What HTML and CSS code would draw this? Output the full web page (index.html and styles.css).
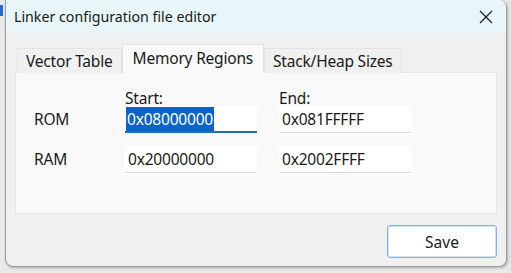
FILE: index.html
```html
<!DOCTYPE html>
<html>
<head>
<meta charset="utf-8">
<link rel="stylesheet" href="styles.css">
</head>
<body>
<div class="backdrop-mark"></div>
<div class="window">
  <div class="titlebar">
    <span class="title">Linker configuration file editor</span>
    <svg class="close" width="14" height="14" viewBox="0 0 14 14"><path d="M1 1 L13 13 M13 1 L1 13" stroke="#1a1a1a" stroke-width="1.2" fill="none"/></svg>
  </div>
  <div class="body">
    <div class="tabs">
      <div class="tab">Vector Table</div>
      <div class="tab active">Memory Regions</div>
      <div class="tab">Stack/Heap Sizes</div>
    </div>
    <div class="panel">
      <div class="grid">
        <div></div>
        <div class="colhead">Start:</div>
        <div class="colhead">End:</div>
        <div class="rowlabel">ROM</div>
        <div class="field focused"><span class="sel">0x08000000</span></div>
        <div class="field">0x081FFFFF</div>
        <div class="rowlabel">RAM</div>
        <div class="field">0x20000000</div>
        <div class="field">0x2002FFFF</div>
      </div>
    </div>
    <div class="footer">
      <button class="save">Save</button>
    </div>
  </div>
</div>
</body>
</html>
```
FILE: styles.css
```css
html, body {
  margin: 0;
  padding: 0;
}
body {
  width: 511px;
  height: 273px;
  background: #e9e9e9;
  font-family: "Noto Sans", "Open Sans", sans-serif;
  color: #1a1a1a;
  overflow: hidden;
  position: relative;
}
.backdrop-mark {
  position: absolute;
  left: 0;
  top: 5px;
  width: 3px;
  height: 11px;
  background: #1f6fd1;
}
.window {
  margin-left: 5px;
  width: 500px;
  height: 266px;
  border: 1px solid #9c9c9c;
  border-top: none;
  border-radius: 0 8px 8px 8px;
  background: #f0f0f0;
  box-shadow: 1px 1px 3px rgba(0,0,0,0.25);
  display: flex;
  flex-direction: column;
  overflow: hidden;
}
.titlebar {
  height: 33px;
  background: #e8f6f9;
  display: flex;
  align-items: center;
  justify-content: space-between;
  padding: 0 13px 0 8px;
}
.title {
  font-size: 14.2px;
  letter-spacing: 0;
}
.body {
  padding: 11px 9px 0 9px;
  display: flex;
  flex-direction: column;
}
.tabs {
  display: flex;
  align-items: flex-end;
  margin-left: 2px;
  height: 29px;
  margin-bottom: -1px;
  position: relative;
  z-index: 1;
}
.tab {
  height: 25px;
  box-sizing: border-box;
  padding: 0 8px;
  border: 1px solid #e3e3e3;
  border-bottom: none;
  background: #f0f0f0;
  font-size: 15.5px;
  line-height: 24px;
  letter-spacing: -0.2px;
}
.tab.active {
  height: 29px;
  background: #f9f9f9;
  padding: 0 10px;
  line-height: 26px;
}
.panel {
  height: 142px;
  box-sizing: border-box;
  background: #f9f9f9;
  border: 1px solid #e5e5e5;
  padding: 17px 0 0 18px;
}
.grid {
  display: grid;
  grid-template-columns: 69px 132px 132px;
  column-gap: 22px;
  grid-template-rows: 16px 27px 27px;
}
.colhead {
  font-size: 15.5px;
  line-height: 16px;
  letter-spacing: -0.2px;
}
.rowlabel {
  font-size: 15.5px;
  line-height: 27px;
  letter-spacing: -0.2px;
}
.grid > :nth-child(n+7) {
  margin-top: 13px;
}
.field {
  background: #ffffff;
  border-bottom: 1px solid #dcdcdc;
  box-sizing: border-box;
  height: 27px;
  font-size: 15.5px;
  line-height: 26px;
  padding-left: 3px;
  letter-spacing: -0.2px;
}
.field.focused {
  border-bottom: 2px solid #1a6fc4;
  padding-left: 1px;
}
.sel {
  background: #0a64c8;
  color: #ffffff;
  padding: 1px 1px;
}
.footer {
  display: flex;
  justify-content: flex-end;
  padding: 11px 0 0 0;
}
.save {
  width: 110px;
  height: 33px;
  background: #ffffff;
  border: 1px solid #7eb4e8;
  border-radius: 3px;
  box-shadow: inset 0 0 0 1px #cfe3f6;
  font-family: "Noto Sans", "Open Sans", sans-serif;
  font-size: 15.5px;
  color: #1a1a1a;
}
```
